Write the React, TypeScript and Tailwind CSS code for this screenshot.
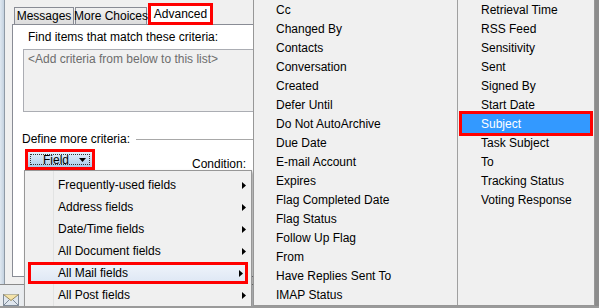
const col1 = [
  "Cc",
  "Changed By",
  "Contacts",
  "Conversation",
  "Created",
  "Defer Until",
  "Do Not AutoArchive",
  "Due Date",
  "E-mail Account",
  "Expires",
  "Flag Completed Date",
  "Flag Status",
  "Follow Up Flag",
  "From",
  "Have Replies Sent To",
  "IMAP Status",
];

const col2 = [
  "Retrieval Time",
  "RSS Feed",
  "Sensitivity",
  "Sent",
  "Signed By",
  "Start Date",
  "Subject",
  "Task Subject",
  "To",
  "Tracking Status",
  "Voting Response",
];

const fieldGroups = [
  "Frequently-used fields",
  "Address fields",
  "Date/Time fields",
  "All Document fields",
  "All Mail fields",
  "All Post fields",
];

function Arrow() {
  return (
    <svg width="4" height="7" viewBox="0 0 4 7" className="shrink-0">
      <path d="M0 0 L4 3.5 L0 7 Z" fill="#000" />
    </svg>
  );
}

function Envelope() {
  return (
    <svg width="16" height="12" viewBox="0 0 16 12">
      <rect x="0.5" y="0.5" width="15" height="11" fill="#dfe6ee" stroke="#7f8b99" />
      <path d="M0.5 0.5 L8 6.5 L15.5 0.5" fill="#f4e3a9" stroke="#9a8a5a" />
      <path d="M0.5 11.5 L6 6 M15.5 11.5 L10 6" stroke="#7f8b99" />
    </svg>
  );
}

export default function App() {
  return (
    <div className="relative h-[308px] w-[599px] overflow-hidden bg-[#f0f0f0] font-['Liberation_Sans',Arial,sans-serif] text-[12px] leading-none text-black">
      {/* dialog behind the menus */}
      <div className="flex h-[284px]">
        <div className="w-[5px] border-r border-[#8f9aa6] bg-gradient-to-r from-[#dfe8f1] to-[#c4d2e0]" />
        <div className="flex flex-1 flex-col pl-[7px] pt-[4px]">
          {/* tabs */}
          <div className="flex h-[20px] items-end whitespace-nowrap pl-[2px]">
            <div className="flex h-[17px] w-[60px] items-center justify-center border border-b-0 border-[#898c95] bg-gradient-to-b from-[#f2f2f2] to-[#dcdcdc]">
              Messages
            </div>
            <div className="ml-[1px] flex h-[17px] w-[72px] items-center justify-center border border-b-0 border-[#898c95] bg-gradient-to-b from-[#f2f2f2] to-[#dcdcdc]">
              More Choices
            </div>
            <div className="relative z-10 -mb-[1px] ml-[1px] flex h-[22px] w-[65px] items-center justify-center border-[3px] border-[#ff0000] bg-white pb-[1px]">
              Advanced
            </div>
          </div>
          {/* panel */}
          <div className="flex h-[253px] flex-col border border-[#898c95] bg-white pl-[15px] pt-[6px]">
            <div>Find items that match these criteria:</div>
            <div className="-ml-[5px] mt-[6px] h-[63px] border border-[#abadb3] bg-[#f0f0f0] pl-[4px] pt-[3px] text-[#6d6d6d]">
              &lt;Add criteria from below to this list&gt;
            </div>
            <div className="mt-[21px] flex items-center gap-[6px]">
              <span className="-ml-[6px]">Define more criteria:</span>
              <div className="h-px flex-1 bg-[#a8a8a8]" />
            </div>
            <div className="mt-[4px] flex items-start">
              <div className="-ml-[3px] flex h-[21px] w-[70px] items-center border-[3px] border-[#ff0000] bg-gradient-to-b from-[#e3f0fb] to-[#a9cbea] px-[2px]">
                <div className="flex h-[11px] flex-1 items-center justify-between border border-dotted border-[#333] pl-[12px] pr-[3px]">
                  <span>Field</span>
                  <svg width="7" height="4" viewBox="0 0 7 4">
                    <path d="M0 0 H7 L3.5 4 Z" fill="#000" />
                  </svg>
                </div>
              </div>
              <span className="ml-[97px] mt-[9px]">Condition:</span>
            </div>
          </div>
        </div>
      </div>
      <div className="flex h-[24px] items-center border-t border-[#8a8a8a] bg-[#e9ecef] pl-[3px] pt-[6px]">
        <Envelope />
      </div>

      {/* Field dropdown menu */}
      <div className="absolute left-[24px] top-[170px] flex h-[140px] w-[228px] border border-[#979797] bg-[#f0f0f0] pt-[3px] shadow-[2px_2px_3px_rgba(0,0,0,0.35)]">
        <div className="absolute bottom-0 left-[28px] top-0 w-[2px] border-l border-[#e2e3e3] border-r-white" />
        <div className="flex flex-1 flex-col">
          {fieldGroups.map((g) => (
            <div
              key={g}
              className={
                g === "All Mail fields"
                  ? "relative mx-[3px] flex h-[22px] items-center border-[3px] border-[#ff0000] bg-gradient-to-b from-[#eef3fa] to-[#dfe8f5] pl-[27px] pr-[2px]"
                  : "relative flex h-[22px] items-center pl-[33px] pr-[5px]"
              }
            >
              <span className="flex-1">{g}</span>
              <Arrow />
            </div>
          ))}
        </div>
      </div>

      {/* All Mail fields submenu */}
      <div className="absolute left-[253px] top-[-1px] flex h-[307px] w-[342px] border border-[#979797] bg-[#f0f0f0]">
        <div className="flex w-[204px] flex-col border-r border-[#a0a0a0]">
          {col1.map((t) => (
            <div key={t} className="flex h-[19px] items-center pl-[22px]">
              {t}
            </div>
          ))}
        </div>
        <div className="flex flex-1 flex-col">
          {col2.map((t) =>
            t === "Subject" ? (
              <div
                key={t}
                className="relative -my-[3px] ml-[1px] mr-[1px] flex h-[25px] items-center border-[3px] border-[#ff0000] bg-[#3399ff] pl-[19px] text-white"
              >
                {t}
              </div>
            ) : (
              <div key={t} className="flex h-[19px] items-center pl-[23px]">
                {t}
              </div>
            )
          )}
        </div>
      </div>

      {/* right edge strip (window behind) */}
      <div className="absolute bottom-0 right-0 top-0 w-[4px] bg-[#8c8c8c]" />
      <div className="absolute bottom-0 left-0 right-0 h-[2px] bg-[#9a9a9a]" />
    </div>
  );
}
